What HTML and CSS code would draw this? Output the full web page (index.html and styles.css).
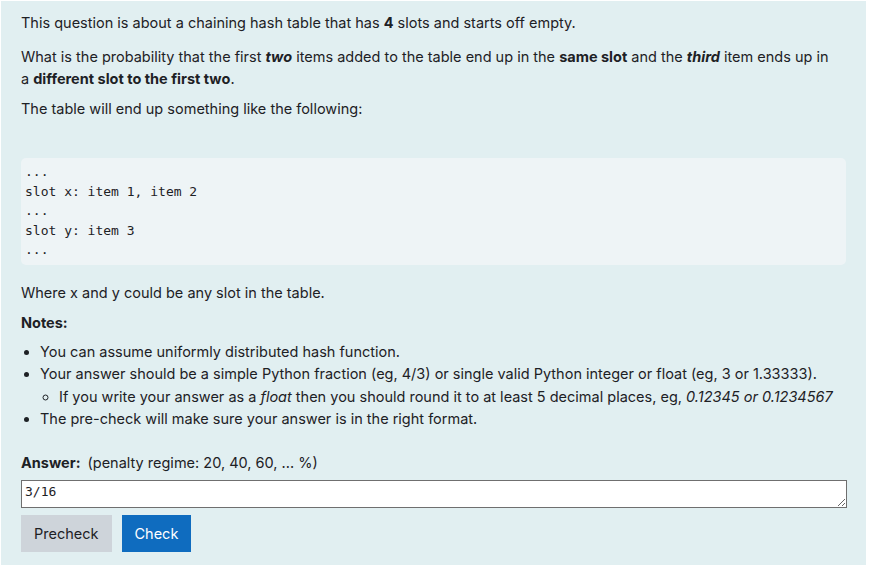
FILE: index.html
```html
<!DOCTYPE html>
<html>
<head>
<meta charset="utf-8">
<link rel="stylesheet" href="styles.css">
</head>
<body>
<div class="que">
  <div class="qtext">
    <p class="p1">This question is about a chaining hash table that has <b>4</b> slots and starts off empty.</p>
    <p class="p2">What is the probability that the first <b><i>two</i></b> items added to the table end up in the <b>same slot</b> and the <b><i>third</i></b> item ends up in a <b>different slot to the first two</b>.</p>
    <p class="p3">The table will end up something like the following:</p>
    <pre class="code">...
slot x: item 1, item 2
...
slot y: item 3
...</pre>
    <p class="p4">Where x and y could be any slot in the table.</p>
    <p class="notes"><b>Notes:</b></p>
    <ul class="list">
      <li>You can assume uniformly distributed hash function.</li>
      <li>Your answer should be a simple Python fraction (eg, 4/3) or single valid Python integer or float (eg, 3 or 1.33333).
        <ul class="sublist">
          <li>If you write your answer as a <i>float</i> then you should round it to at least 5 decimal places, eg, <i>0.12345 or 0.1234567</i></li>
        </ul>
      </li>
      <li>The pre-check will make sure your answer is in the right format.</li>
    </ul>
  </div>
  <div class="answer-row"><b>Answer:</b><span class="penalty">(penalty regime: 20, 40, 60, ... %)</span></div>
  <textarea class="answer" rows="1">3/16</textarea>
  <div class="buttons">
    <button class="btn btn-secondary">Precheck</button>
    <button class="btn btn-primary">Check</button>
  </div>
</div>
</body>
</html>
```
FILE: styles.css
```css
html, body {
  margin: 0;
  padding: 0;
  background: #ffffff;
}
body {
  font-family: Inter, "Liberation Sans", Arial, sans-serif;
  font-size: 14.5px;
  color: #1d2125;
}
.que {
  margin: 1px 0 0 1px;
  width: 865px;
  box-sizing: border-box;
  background: #e1eff1;
  padding: 11px 20px 13px 20px;
}
.qtext p {
  margin: 0;
  line-height: 22px;
}
.p1 { margin-bottom: 12px !important; }
.p2 { margin-bottom: 8px !important; margin-right: 8px !important; }
.p3 { margin-bottom: 38px !important; }
.code {
  margin: 0;
  background: #eef4f6;
  border-radius: 5px;
  padding: 4px 4px 5px 4px;
  font-family: "DejaVu Sans Mono", monospace;
  font-size: 13px;
  line-height: 19.5px;
  color: #1d2125;
}
.p4 { margin-top: 17px !important; margin-bottom: 8px !important; }
.notes { margin-bottom: 7px !important; }
.list {
  margin: 0;
  padding-left: 19px;
  line-height: 22.5px;
}
.sublist {
  margin: 0;
  padding-left: 19px;
  list-style-type: circle;
}
.answer-row {
  margin-top: 21px;
  line-height: 22px;
}
.penalty {
  margin-left: 7px;
}
.answer {
  display: block;
  box-sizing: border-box;
  width: 826px;
  height: 28px;
  margin-top: 6px;
  padding: 3px 3px;
  border: 1px solid #6f6f6f;
  border-radius: 0;
  background: #ffffff;
  font-family: "DejaVu Sans Mono", monospace;
  font-size: 13px;
  color: #1d2125;
  resize: vertical;
}
.buttons {
  display: flex;
  gap: 10px;
  margin-top: 7px;
}
.btn {
  font-family: Inter, "Liberation Sans", Arial, sans-serif;
  font-size: 14.5px;
  border: none;
  border-radius: 0;
  height: 37px;
  padding: 0 13px;
}
.btn-secondary {
  background: #ced4da;
  color: #1d2125;
}
.btn-primary {
  background: #0f6cbf;
  color: #ffffff;
}
```
